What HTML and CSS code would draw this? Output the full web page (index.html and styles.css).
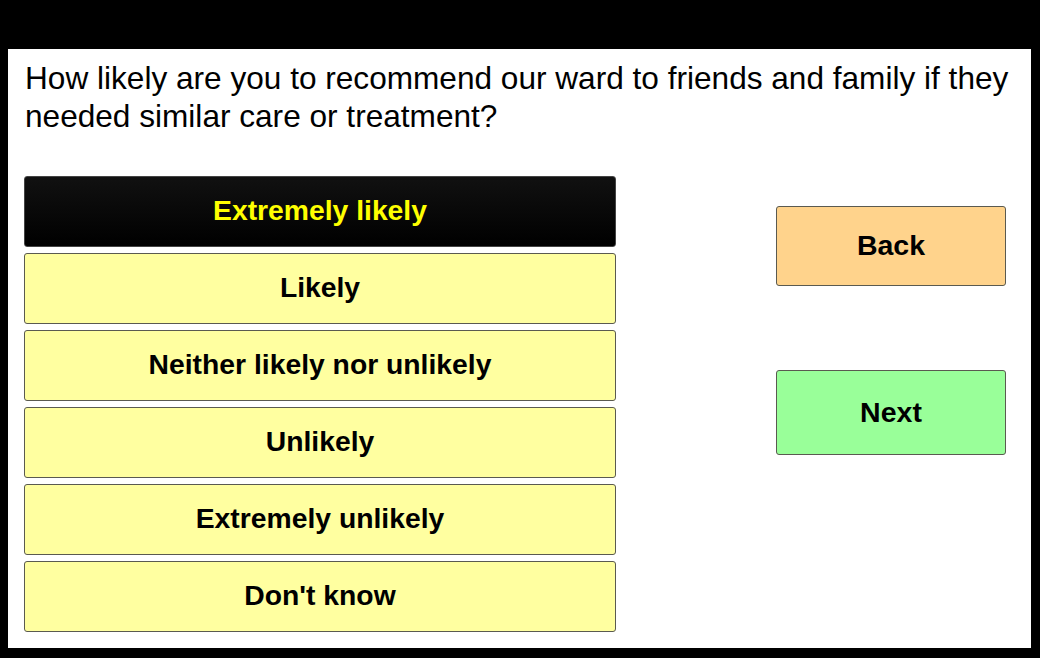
FILE: index.html
```html
<!DOCTYPE html>
<html>
<head>
<meta charset="utf-8">
<link rel="stylesheet" href="styles.css">
</head>
<body>
<div class="panel">
  <p class="question">How likely are you to recommend our ward to friends and family if they needed similar care or treatment?</p>
  <div class="content">
    <div class="options">
      <div class="option selected">Extremely likely</div>
      <div class="option">Likely</div>
      <div class="option">Neither likely nor unlikely</div>
      <div class="option">Unlikely</div>
      <div class="option">Extremely unlikely</div>
      <div class="option">Don't know</div>
    </div>
    <div class="nav">
      <div class="btn back">Back</div>
      <div class="btn next">Next</div>
    </div>
  </div>
</div>
</body>
</html>
```
FILE: styles.css
```css
html, body {
  margin: 0;
  padding: 0;
  background: #000;
  width: 1040px;
  height: 658px;
  overflow: hidden;
}
body {
  padding: 49px 9px 10px 8px;
  box-sizing: border-box;
  font-family: "Liberation Sans", Arial, sans-serif;
}
.panel {
  background: #fff;
  height: 599px;
  box-sizing: border-box;
  padding: 10px 8px 0 16px;
}
.question {
  margin: 0;
  font-size: 31.6px;
  line-height: 38px;
  color: #000;
  padding-left: 1px;
}
.content {
  display: flex;
  justify-content: space-between;
  margin-top: 41px;
  padding-right: 17px;
}
.options {
  width: 592px;
  display: flex;
  flex-direction: column;
  gap: 6px;
}
.option {
  height: 71px;
  box-sizing: border-box;
  border: 1px solid #5a5a50;
  border-radius: 3px;
  background: #ffffa0;
  display: flex;
  align-items: center;
  justify-content: center;
  padding-bottom: 3px;
  font-weight: bold;
  font-size: 28.3px;
  color: #000;
}
.option.selected {
  background: linear-gradient(#111, #000);
  color: #ffff00;
  border-color: #444;
}
.nav {
  width: 230px;
  display: flex;
  flex-direction: column;
}
.btn {
  box-sizing: border-box;
  border: 1px solid #5a5a50;
  border-radius: 3px;
  display: flex;
  align-items: center;
  justify-content: center;
  padding-bottom: 1px;
  font-weight: bold;
  font-size: 28.5px;
  color: #000;
}
.back {
  margin-top: 30px;
  height: 80px;
  background: #ffd38c;
}
.next {
  margin-top: 84px;
  height: 85px;
  background: #99ff99;
}
```
